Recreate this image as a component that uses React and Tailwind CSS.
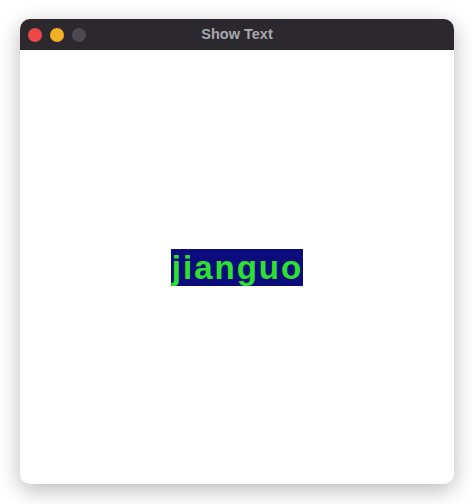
export default function App() {
  return (
    <div className="w-[474px] h-[504px] bg-white pt-[19px] pl-[20px]">
      <div className="w-[434px] h-[465px] rounded-[10px] overflow-hidden flex flex-col bg-white shadow-[0_6px_22px_rgba(0,0,0,0.28)]">
        {/* title bar */}
        <div className="relative h-[31px] bg-[#2b292e] flex items-center pl-[8px] gap-[8px] shrink-0">
          <span className="w-[14px] h-[14px] rounded-full bg-[#ec4646]" />
          <span className="w-[14px] h-[14px] rounded-full bg-[#f4b025]" />
          <span className="w-[14px] h-[14px] rounded-full bg-[#4b494f]" />
          <div className="absolute inset-0 flex items-center justify-center pointer-events-none">
            <span className="text-[14.5px] font-bold text-[#a9a8ad] font-['Liberation_Sans',Arial,sans-serif]">
              Show Text
            </span>
          </div>
        </div>
        {/* content */}
        <div className="flex-1 flex items-center justify-center">
          <span className="bg-[#0b0b7c] text-[#2fe12f] text-[33px] leading-[37px] font-bold tracking-[2px] pl-[1px] font-['Liberation_Sans',Arial,sans-serif]">
            jianguo
          </span>
        </div>
      </div>
    </div>
  );
}
